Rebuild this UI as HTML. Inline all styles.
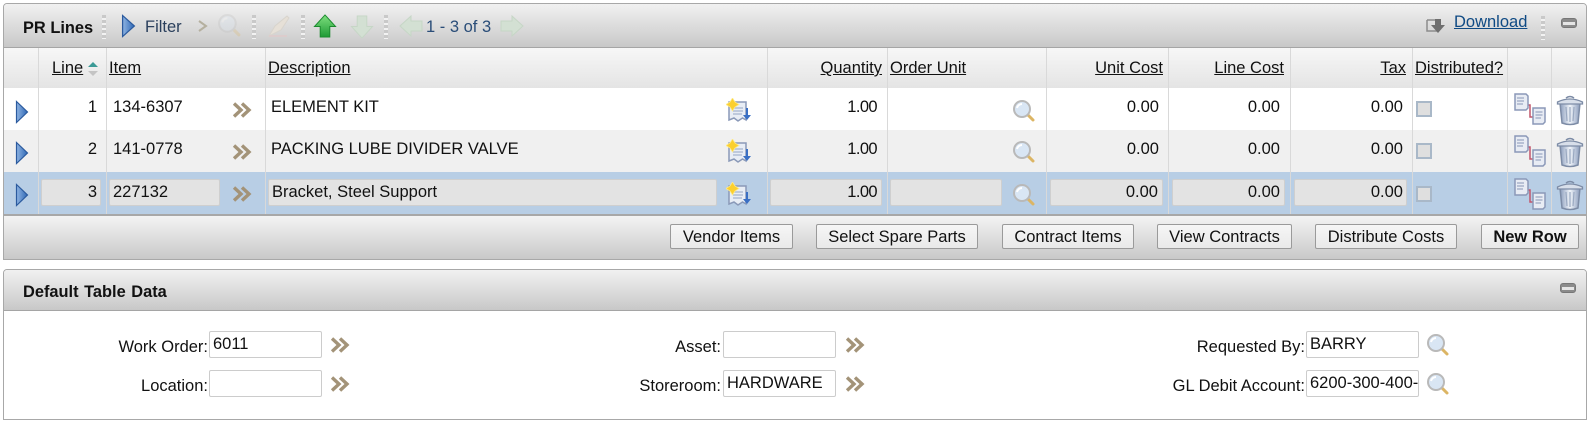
<!DOCTYPE html>
<html><head><meta charset="utf-8"><style>
html,body{margin:0;padding:0;background:#fff;width:1594px;height:424px;overflow:hidden}
body{font-family:"Liberation Sans",Arial,sans-serif;font-size:16.5px;color:#111;position:relative}
div,span,svg{position:absolute;box-sizing:border-box}
.t{white-space:nowrap;line-height:20px;height:20px}
.r{text-align:right}
.u{text-decoration:underline}
.sep{width:1px;background:#d9d9d9}
.in{background:#e3e3e3;border:1px solid #cfcfcf;border-radius:2px;height:27px;line-height:24px;padding:0 3px;white-space:nowrap;overflow:hidden}
.w{background:#fff;border:1px solid #ccc;border-radius:2px;height:27px;line-height:25px;padding:0 3px;white-space:nowrap;overflow:hidden;width:113px}
.b{top:224px;height:25px;border:1px solid #9a9a9a;border-radius:2px;background:linear-gradient(#f6f6f6,#e9e9e9);text-align:center;line-height:24px;white-space:nowrap}
.dots{width:4px;height:24px;background:repeating-linear-gradient(#c9c9c9 0 3px,#f2f2f2 3px 5px)}
.cb{width:16px;height:16px;background:#dfdfdf;border:2px solid #a9b8c8}
.q{letter-spacing:-.6px}
</style></head><body>
<svg width="0" height="0" style="left:0;top:0">
<defs>
<linearGradient id="bl" x1="0" x2="1" y1="0" y2="0"><stop offset="0" stop-color="#8fb4e2"/><stop offset="1" stop-color="#2f68b5"/></linearGradient>
<linearGradient id="gr" x1="0" x2="0" y1="0" y2="1"><stop offset="0" stop-color="#7fe07f"/><stop offset="1" stop-color="#1e9a35"/></linearGradient>
<linearGradient id="tr" x1="0" x2="1" y1="0" y2="0"><stop offset="0" stop-color="#8a9cbc"/><stop offset=".5" stop-color="#f0f4f9"/><stop offset="1" stop-color="#8a9cbc"/></linearGradient>
<symbol id="play" viewBox="0 0 14 24"><path d="M1.500 1.500L12.500 12L1.500 22.500Z" fill="url(#bl)" stroke="#2b5a9e" stroke-width="1.200"/></symbol>
<symbol id="chev" viewBox="0 0 20 16"><path d="M1 1.500L8 8L1 14.500M9 1.500L16 8L9 14.500" fill="none" stroke="#a39378" stroke-width="3.400"/></symbol>
<symbol id="mag" viewBox="0 0 24 24"><path d="M15 15L21 21" stroke="#dcb564" stroke-width="3" stroke-linecap="round"/><circle cx="10" cy="10" r="8" fill="#d9e6f4" stroke="#b9b9b9" stroke-width="2"/><path d="M5 9a5 5 0 0 1 5-4" stroke="#fff" stroke-width="2" fill="none"/></symbol>
<symbol id="note" viewBox="0 0 26 26"><path d="M3 4H20V22L16.500 20L12 23L8 20L3 22Z" fill="#e8edf5" stroke="#8a99b8" stroke-width="1.500"/><path d="M7 10H17M7 13H17M7 16H16" stroke="#b0bdd3" stroke-width="1.500"/><path d="M21 10V19" stroke="#3a6fc4" stroke-width="2"/><path d="M17 17H25L21 22Z" fill="#3a6fc4"/><path d="M6.500 0L9 4L13 6.500L9 9L6.500 13L4 9L0 6.500L4 4Z" fill="#fbcf2e" stroke="#fde98a" stroke-width=".8"/></symbol>
<symbol id="docs" viewBox="0 0 32 32"><path d="M14 12H16V24H20" fill="none" stroke="#c2566c" stroke-width="1.500"/><path d="M1 1H12L14 3V15L12 17H1Z" fill="#e8ecf4" stroke="#8b98b8" stroke-width="1.500"/><path d="M3 5H10M3 8H10M3 11H9" stroke="#9ba7c2" stroke-width="1.200"/><path d="M19 15H31V29L29 31H19Z" fill="#e8ecf4" stroke="#8b98b8" stroke-width="1.500"/><path d="M21.500 19H28.500M21.500 22H28.500M21.500 25H27" stroke="#9ba7c2" stroke-width="1.200"/></symbol>
<symbol id="trash" viewBox="0 0 28 32"><path d="M4 9L6 29Q14 32 22 29L24 9Z" fill="url(#tr)" stroke="#7d8ca6" stroke-width="1.500"/><path d="M1.500 8Q14 2 26.500 8V10H1.500Z" fill="#d8dfea" stroke="#7d8ca6" stroke-width="1.300"/><path d="M10 4Q14 1 18 4" fill="none" stroke="#7d8ca6" stroke-width="1.500"/><path d="M10 13L11 27M14 13V28M18 13L17 27" stroke="#9aa9c1" stroke-width="1.200"/></symbol>
<symbol id="arrup" viewBox="0 0 24 26"><path d="M12 1L23 13H17V24H7V13H1Z"/></symbol>
<symbol id="arrl" viewBox="0 0 24 22"><path d="M1 11L12 1V6H23V16H12V21Z"/></symbol>
<symbol id="min" viewBox="0 0 16 10"><rect x=".5" y=".5" width="15" height="9" rx="2.500" fill="#8b8b8b" stroke="#777"/><rect x="2" y="4" width="12" height="3" fill="#e5e5e5"/></symbol>
</defs></svg>

<!-- Panel 1 -->
<div style="left:3px;top:3px;width:1584px;height:257px;border:1px solid #a8a8a8;border-radius:4px 4px 0 0"></div>
<div style="left:4px;top:4px;width:1582px;height:44px;background:linear-gradient(#f1f1f1,#c8c8c8);border-bottom:1px solid #a5a5a5;border-radius:3px 3px 0 0"></div>
<div class="t" style="left:23px;top:18px;font-weight:bold;font-size:16.400px">PR Lines</div>
<div class="dots" style="left:102px;top:15px"></div>
<svg style="left:121px;top:14px" width="15" height="24" preserveAspectRatio="none" viewBox="0 0 14 24"><use href="#play" width="14" height="24"/></svg>
<div class="t" style="left:145px;top:17px;color:#2a3f5c">Filter</div>
<svg style="left:197px;top:20px" width="12" height="12"><path d="M2 1L9 6L2 11" fill="none" stroke="#b5b09f" stroke-width="2"/></svg>
<svg style="left:217px;top:13px;opacity:.25" width="25" height="25"><use href="#mag"/></svg>
<div class="dots" style="left:252px;top:15px"></div>
<svg style="left:267px;top:14px" width="24" height="24"><path d="M2 22L8 12L20 2L22 4L14 16Z" fill="#e6e0d7" stroke="#d8d4cd"/><path d="M2 22H20" stroke="#dccccc" stroke-width="2"/></svg>
<div class="dots" style="left:301px;top:15px"></div>
<svg style="left:313px;top:14px" width="24" height="25" fill="url(#gr)" stroke="#1b8a2e"><use href="#arrup"/></svg>
<svg style="left:350px;top:14px;transform:rotate(180deg)" width="24" height="25" fill="#d3e0d3" stroke="#c6d6c6"><use href="#arrup"/></svg>
<div class="dots" style="left:384px;top:15px"></div>
<svg style="left:399px;top:15px" width="24" height="22" fill="#d3e0d3" stroke="#c6d6c6"><use href="#arrl"/></svg>
<div class="t" style="left:426px;top:17px;color:#2a4d78">1 - 3 of 3</div>
<svg style="left:500px;top:15px;transform:scaleX(-1)" width="24" height="22" fill="#d3e0d3" stroke="#c6d6c6"><use href="#arrl"/></svg>
<svg style="left:1425px;top:17px" width="22" height="18"><path d="M2 3H12M2 3V14H12" fill="none" stroke="#8c8c8c" stroke-width="1.500"/><path d="M10 2H16V8H20L13 16L6 8H10Z" fill="#6e6e6e"/></svg>
<div class="t u" style="left:1454px;top:12px;color:#0f4a84">Download</div>
<div class="dots" style="left:1541px;top:16px"></div>
<svg style="left:1561px;top:18px" width="16" height="10"><use href="#min"/></svg>

<!-- Column header -->
<div style="left:4px;top:48px;width:1582px;height:40px;background:linear-gradient(#f7f7f7,#e4e4e4)"></div>
<!-- Rows -->
<div style="left:4px;top:88px;width:1582px;height:42px;background:#fff"></div>
<div style="left:4px;top:130px;width:1582px;height:42px;background:#f0f0f0"></div>
<div style="left:4px;top:172px;width:1582px;height:42px;background:#b8cee5"></div>
<div style="left:4px;top:214px;width:1582px;height:2px;background:#a8a8a8"></div>
<div style="left:4px;top:216px;width:1582px;height:43px;background:linear-gradient(#f4f4f4,#c9c9c9)"></div>
<!-- Separators -->
<div class="sep" style="left:38px;top:48px;height:166px"></div>
<div class="sep" style="left:106px;top:48px;height:166px"></div>
<div class="sep" style="left:265px;top:48px;height:166px"></div>
<div class="sep" style="left:767px;top:48px;height:166px"></div>
<div class="sep" style="left:887px;top:48px;height:166px"></div>
<div class="sep" style="left:1046px;top:48px;height:166px"></div>
<div class="sep" style="left:1168px;top:48px;height:166px"></div>
<div class="sep" style="left:1290px;top:48px;height:166px"></div>
<div class="sep" style="left:1412px;top:48px;height:166px"></div>
<div class="sep" style="left:1507px;top:48px;height:166px"></div>
<div class="sep" style="left:1551px;top:48px;height:166px"></div>
<!-- Headers -->
<div class="t u" style="left:52px;top:58px">Line</div>
<svg style="left:87px;top:61px" width="12" height="16"><path d="M1 6L6 1L11 6Z" fill="#3b9a96"/><path d="M1 10L6 15L11 10Z" fill="#c4c4c4"/></svg>
<div class="t u" style="left:109px;top:58px">Item</div>
<div class="t u" style="left:268px;top:58px">Description</div>
<div class="t u r" style="left:780px;width:102px;top:58px">Quantity</div>
<div class="t u" style="left:890px;top:58px">Order Unit</div>
<div class="t u r" style="left:1060px;width:103px;top:58px">Unit Cost</div>
<div class="t u r" style="left:1180px;width:104px;top:58px">Line Cost</div>
<div class="t u r" style="left:1330px;width:76px;top:58px">Tax</div>
<div class="t u" style="left:1415px;top:58px">Distributed?</div>
<!-- Row 1 -->
<svg style="left:15px;top:100px" width="14" height="24"><use href="#play"/></svg>
<div class="t r" style="left:40px;width:57px;top:97px">1</div>
<div class="t" style="left:113px;top:97px">134-6307</div>
<svg style="left:233px;top:102px" width="20" height="16"><use href="#chev"/></svg>
<div class="t" style="left:271px;top:97px">ELEMENT KIT</div>
<svg style="left:726px;top:98px" width="26" height="26"><use href="#note"/></svg>
<div class="t r q" style="left:790px;width:87px;top:97px">1.00</div>
<svg style="left:1012px;top:99px" width="24" height="24"><use href="#mag"/></svg>
<div class="t r" style="left:1060px;width:99px;top:97px">0.00</div>
<div class="t r" style="left:1180px;width:100px;top:97px">0.00</div>
<div class="t r" style="left:1300px;width:103px;top:97px">0.00</div>
<div class="cb" style="left:1416px;top:101px"></div>
<svg style="left:1514px;top:93px" width="32" height="32"><use href="#docs"/></svg>
<svg style="left:1556px;top:94px" width="28" height="32"><use href="#trash"/></svg>
<!-- Row 2 -->
<svg style="left:15px;top:141px" width="14" height="24"><use href="#play"/></svg>
<div class="t r" style="left:40px;width:57px;top:139px">2</div>
<div class="t" style="left:113px;top:139px">141-0778</div>
<svg style="left:233px;top:144px" width="20" height="16"><use href="#chev"/></svg>
<div class="t" style="left:271px;top:139px">PACKING LUBE DIVIDER VALVE</div>
<svg style="left:726px;top:139px" width="26" height="26"><use href="#note"/></svg>
<div class="t r q" style="left:790px;width:87px;top:139px">1.00</div>
<svg style="left:1012px;top:140px" width="24" height="24"><use href="#mag"/></svg>
<div class="t r" style="left:1060px;width:99px;top:139px">0.00</div>
<div class="t r" style="left:1180px;width:100px;top:139px">0.00</div>
<div class="t r" style="left:1300px;width:103px;top:139px">0.00</div>
<div class="cb" style="left:1416px;top:143px"></div>
<svg style="left:1514px;top:135px" width="32" height="32"><use href="#docs"/></svg>
<svg style="left:1556px;top:136px" width="28" height="32"><use href="#trash"/></svg>
<!-- Row 3 -->
<svg style="left:15px;top:183px" width="14" height="24"><use href="#play"/></svg>
<div class="in r" style="left:41px;top:179px;width:60px">3</div>
<div class="in" style="left:109px;top:179px;width:111px">227132</div>
<svg style="left:233px;top:186px" width="20" height="16"><use href="#chev"/></svg>
<div class="in" style="left:268px;top:179px;width:449px">Bracket, Steel Support</div>
<svg style="left:726px;top:182px" width="26" height="26"><use href="#note"/></svg>
<div class="in r q" style="left:770px;top:179px;width:112px;padding-right:4px">1.00</div>
<div class="in" style="left:890px;top:179px;width:112px"></div>
<svg style="left:1012px;top:183px" width="24" height="24"><use href="#mag"/></svg>
<div class="in r" style="left:1050px;top:179px;width:113px;padding-right:4px">0.00</div>
<div class="in r" style="left:1172px;top:179px;width:113px;padding-right:4px">0.00</div>
<div class="in r" style="left:1294px;top:179px;width:113px">0.00</div>
<div class="cb" style="left:1416px;top:186px"></div>
<svg style="left:1514px;top:178px" width="32" height="32"><use href="#docs"/></svg>
<svg style="left:1556px;top:179px" width="28" height="32"><use href="#trash"/></svg>
<!-- Buttons -->
<div class="b" style="left:670px;width:123px">Vendor Items</div>
<div class="b" style="left:816px;width:162px">Select Spare Parts</div>
<div class="b" style="left:1002px;width:132px">Contract Items</div>
<div class="b" style="left:1157px;width:135px">View Contracts</div>
<div class="b" style="left:1315px;width:142px">Distribute Costs</div>
<div class="b" style="left:1481px;width:98px;font-weight:bold">New Row</div>

<!-- Panel 2 -->
<div style="left:3px;top:269px;width:1584px;height:151px;border:1px solid #a8a8a8;border-radius:4px 4px 0 0"></div>
<div style="left:4px;top:270px;width:1582px;height:41px;background:linear-gradient(#f1f1f1,#c8c8c8);border-bottom:1px solid #a5a5a5;border-radius:3px 3px 0 0"></div>
<div class="t" style="left:23px;top:282px;font-weight:bold;word-spacing:1px;font-size:16.400px">Default Table Data</div>
<svg style="left:1560px;top:283px" width="16" height="10"><use href="#min"/></svg>

<div class="t r" style="left:60px;width:148px;top:337px">Work Order:</div>
<div class="w" style="left:209px;top:331px">6011</div>
<svg style="left:331px;top:337px" width="20" height="16"><use href="#chev"/></svg>
<div class="t r" style="left:60px;width:148px;top:376px">Location:</div>
<div class="w" style="left:209px;top:370px"></div>
<svg style="left:331px;top:376px" width="20" height="16"><use href="#chev"/></svg>

<div class="t r" style="left:580px;width:141px;top:337px">Asset:</div>
<div class="w" style="left:723px;top:331px"></div>
<svg style="left:846px;top:337px" width="20" height="16"><use href="#chev"/></svg>
<div class="t r" style="left:580px;width:141px;top:376px">Storeroom:</div>
<div class="w" style="left:723px;top:370px">HARDWARE</div>
<svg style="left:846px;top:376px" width="20" height="16"><use href="#chev"/></svg>

<div class="t r" style="left:1100px;width:205px;top:337px">Requested By:</div>
<div class="w" style="left:1306px;top:331px">BARRY</div>
<svg style="left:1426px;top:333px" width="24" height="24"><use href="#mag"/></svg>
<div class="t r" style="left:1100px;width:205px;top:376px">GL Debit Account:</div>
<div class="w" style="left:1306px;top:370px">6200-300-400-</div>
<svg style="left:1426px;top:372px" width="24" height="24"><use href="#mag"/></svg>
</body></html>
